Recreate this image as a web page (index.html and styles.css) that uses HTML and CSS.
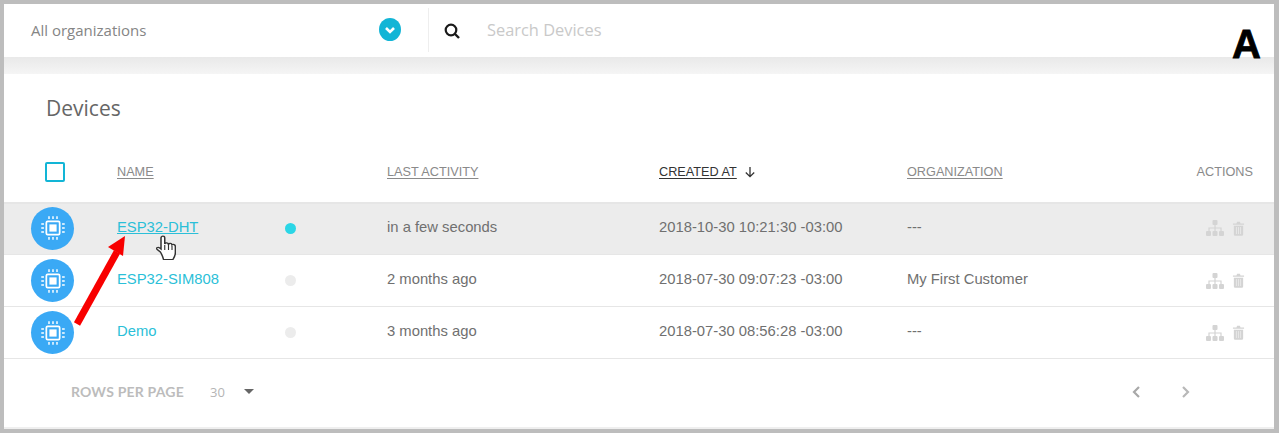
FILE: index.html
```html
<!DOCTYPE html>
<html lang="en">
<head>
<meta charset="utf-8">
<title>Devices</title>
<link rel="stylesheet" href="styles.css">
</head>
<body>
<svg width="0" height="0" class="defs">
  <symbol id="chip" viewBox="0 0 24 24">
    <rect x="7" y="7" width="10" height="10" rx="1" fill="none" stroke="#fff" stroke-width="1.3"/>
    <rect x="9.3" y="9.3" width="5.4" height="5.4" fill="#fff"/>
    <path d="M9 3.2v2M12 3.2v2M15 3.2v2M9 18.8v2M12 18.8v2M15 18.8v2M3.2 9h2M3.2 12h2M3.2 15h2M18.8 9h2M18.8 12h2M18.8 15h2" stroke="#fff" stroke-width="1.1" fill="none"/>
  </symbol>
  <symbol id="tree" viewBox="0 0 18 16">
    <rect x="6.5" y="0" width="5" height="5" rx="1" fill="#d4d4d4"/>
    <path d="M9 5v3M3 11V8h12v3M9 8v3" stroke="#d4d4d4" stroke-width="1.2" fill="none"/>
    <rect x="0" y="11" width="5" height="5" rx="1" fill="#d4d4d4"/>
    <rect x="6.5" y="11" width="5" height="5" rx="1" fill="#d4d4d4"/>
    <rect x="13" y="11" width="5" height="5" rx="1" fill="#d4d4d4"/>
  </symbol>
  <symbol id="trash" viewBox="0 0 14 16">
    <path d="M1 2.500h3.800L5.500 .8h3l.7 1.700H13v1.500H1z" fill="#d4d4d4"/>
    <path d="M2 5h10v9.500a1.300 1.300 0 0 1-1.300 1.300H3.300A1.300 1.300 0 0 1 2 14.500z" fill="#d4d4d4"/>
    <path d="M4.800 6.500v7.500M7 6.500v7.500M9.200 6.500v7.500" stroke="#eee" stroke-width=".8"/>
  </symbol>
</svg>

<div class="frame">
  <header class="topbar">
    <div class="org-select">
      <span class="org-label">All organizations</span>
      <span class="org-toggle">
        <svg width="22" height="23" viewBox="0 0 22 23"><ellipse cx="11" cy="11.500" rx="11" ry="11.500" fill="#12b5d6"/><path d="M7 10l4 4 4-4" fill="none" stroke="#fff" stroke-width="2.600"/></svg>
      </span>
    </div>
    <div class="search">
      <svg class="search-icon" width="16" height="16" viewBox="0 0 16 16"><circle cx="7" cy="7" r="5.300" fill="none" stroke="#1a1a1a" stroke-width="2.200"/><path d="M10.500 10.500l4.500 4.500" stroke="#1a1a1a" stroke-width="2.400"/></svg>
      <span class="search-text">Search Devices</span>
    </div>
  </header>
  <div class="band"></div>

  <main class="card">
    <h1 class="title">Devices</h1>
    <div class="row head">
      <div class="c-check"><span class="checkbox"></span></div>
      <div class="c-name"><span class="sort">NAME</span></div>
      <div></div>
      <div><span class="sort">LAST ACTIVITY</span></div>
      <div class="sorted"><span class="sort dark">CREATED AT</span>
        <svg width="12" height="12" viewBox="0 0 12 12"><path d="M6 1v9.500M1.800 6.500L6 10.700l4.200-4.200" fill="none" stroke="#333" stroke-width="1.300"/></svg>
      </div>
      <div><span class="sort">ORGANIZATION</span></div>
      <div class="c-actions">ACTIONS</div>
    </div>

    <div class="row item hover">
      <div class="c-check"><span class="avatar"><svg width="32" height="32"><use href="#chip"/></svg></span></div>
      <div class="cell"><span class="link under">ESP32-DHT</span></div>
      <div><span class="dot on"></span></div>
      <div class="cell">in a few seconds</div>
      <div class="cell">2018-10-30 10:21:30 -03:00</div>
      <div class="cell">---</div>
      <div class="c-actions icons"><svg width="18" height="16"><use href="#tree"/></svg><svg width="13" height="15"><use href="#trash"/></svg></div>
    </div>
    <div class="row item">
      <div class="c-check"><span class="avatar"><svg width="32" height="32"><use href="#chip"/></svg></span></div>
      <div class="cell"><span class="link">ESP32-SIM808</span></div>
      <div><span class="dot"></span></div>
      <div class="cell">2 months ago</div>
      <div class="cell">2018-07-30 09:07:23 -03:00</div>
      <div class="cell">My First Customer</div>
      <div class="c-actions icons"><svg width="18" height="16"><use href="#tree"/></svg><svg width="13" height="15"><use href="#trash"/></svg></div>
    </div>
    <div class="row item">
      <div class="c-check"><span class="avatar"><svg width="32" height="32"><use href="#chip"/></svg></span></div>
      <div class="cell"><span class="link">Demo</span></div>
      <div><span class="dot"></span></div>
      <div class="cell">3 months ago</div>
      <div class="cell">2018-07-30 08:56:28 -03:00</div>
      <div class="cell">---</div>
      <div class="c-actions icons"><svg width="18" height="16"><use href="#tree"/></svg><svg width="13" height="15"><use href="#trash"/></svg></div>
    </div>

    <footer class="pager">
      <span class="rows-label">ROWS PER PAGE</span>
      <span class="rows-value">30</span>
      <span class="caret"></span>
      <span class="nav">
        <svg width="12" height="14" viewBox="0 0 12 14"><path d="M9 2L4 7l5 5" fill="none" stroke="#a8a8a8" stroke-width="2.200"/></svg>
        <svg width="12" height="14" viewBox="0 0 12 14"><path d="M3 2l5 5-5 5" fill="none" stroke="#b8b8b8" stroke-width="2.200"/></svg>
      </span>
    </footer>
  </main>
</div>

<span class="letter">A</span>

<svg class="arrow" width="80" height="100" viewBox="0 0 80 100"><path d="M5 93L45 21" stroke="#f80000" stroke-width="7" fill="none"/><path d="M53 5L36 16 51 25z" fill="#f80000"/></svg>

<svg class="cursor" width="20" height="25" viewBox="1.500 0 16 25" preserveAspectRatio="none"><path d="M5 17L2.500 14.500C1 13 3 11.500 4.500 13L5.500 14V3C5.500 .5 8.500 .5 8.500 3V9C9 7.500 11 7.500 11.500 9.500C12 8 14 8 14.300 10C15 9 17 9.500 17 11.500V17.500C17 21 15.500 23.500 15 24.500H7.500C7 22 6 19 5 17z" fill="#fff" stroke="#333" stroke-width="1.200"/><path d="M8.500 10V15M11.500 10V15M14.300 11V15" stroke="#333" stroke-width=".9"/></svg>
</body>
</html>
```
FILE: styles.css
```css
* { box-sizing: border-box; }
html, body { margin: 0; height: 433px; overflow: hidden; background: #bdbdbd; }
body { font-family: "Liberation Sans", Arial, sans-serif; color: #6e6e6e; position: relative; }
.defs { position: absolute; }
.frame { margin: 4px 5px 4px 4px; height: 425px; background: #fff; display: flex; flex-direction: column; }

.topbar { height: 53px; padding-bottom: 2px; background: #fff; display: flex; align-items: center; flex: none; font-family: "Open Sans", sans-serif; font-size: 15px; }
.org-select { width: 425px; height: 44px; padding: 0 27px 0 27px; display: flex; align-items: center; justify-content: space-between; border-right: 1px solid #eee; }
.org-label { color: #858585; }
.org-toggle { display: flex; }
.search { display: flex; align-items: center; padding-left: 15px; }
.search-text { color: #c9c9c9; font-size: 16.4px; margin-left: 27px; }
.search-icon { flex: none; margin-top: 2px; }

.band { height: 17px; flex: none; background: linear-gradient(#e9e9e9, #f5f5f5); }

.card { flex: 1; display: flex; flex-direction: column; font-size: 14.8px; }
.title { margin: 0; padding: 20px 0 0 42px; height: 69px; font-family: "Open Sans", sans-serif; font-weight: 400; font-size: 21px; line-height: 28px; color: #666; }

.row { display: grid; grid-template-columns: 113px 168px 102px 272px 248px 1fr 120px; align-items: center; }
.head { height: 59px; font-size: 12.7px; color: #8a8a8a; padding-bottom: 2px; }
.item { height: 52px; border-top: 1px solid #e6e6e6; color: #707070; }
.item.hover { background: #ececec; border-top: 2px solid #e6e6e6; padding-bottom: 2px; }
.item:last-of-type { border-bottom: 1px solid #e6e6e6; height: 53px; }
.cell { padding-bottom: 4px; }
.hover .cell { padding-bottom: 2px; }

.c-check { position: relative; }
.checkbox { display: block; width: 20px; height: 20px; margin-left: 41px; border: 2px solid #12b5d6; border-radius: 2px; }
.avatar { display: flex; align-items: center; justify-content: center; width: 43px; height: 43px; margin-left: 27px; border-radius: 50%; background: #3aa9f5; }
.sort { text-decoration: underline; text-underline-offset: 2px; }
.sort.dark { color: #333; }
.sorted { display: flex; align-items: center; gap: 7px; }
.c-actions { text-align: right; padding-right: 21px; }
.icons { display: flex; justify-content: flex-end; align-items: center; gap: 8px; padding-right: 29px; }
.link { color: #2bbfd8; }
.under { text-decoration: underline; }
.dot { display: block; width: 11px; height: 11px; border-radius: 50%; background: #ececec; }
.dot.on { background: #2bd6e6; }

.pager { flex: 1; display: flex; align-items: center; padding: 0 0 3px 67px; border-bottom: 2px solid #efefef; }
.rows-label { font-family: Lato, "Open Sans", sans-serif; font-weight: 700; font-size: 14px; color: #bcbcbc; width: 139px; letter-spacing: .2px; }
.rows-value { font-family: "Open Sans", sans-serif; font-size: 13px; color: #b5b5b5; width: 34px; }
.caret { width: 0; height: 0; border-left: 5px solid transparent; border-right: 5px solid transparent; border-top: 5px solid #666; }
.nav { margin-left: auto; margin-right: 82px; display: flex; gap: 38px; }

.letter { position: absolute; left: 1232px; top: 21px; font-family: "Liberation Sans", Arial, sans-serif; font-weight: 700; font-size: 40px; line-height: 46px; color: #000; -webkit-text-stroke: .8px #000; }
.arrow { position: absolute; left: 72px; top: 231px; }
.cursor { position: absolute; left: 156px; top: 235px; }
```
